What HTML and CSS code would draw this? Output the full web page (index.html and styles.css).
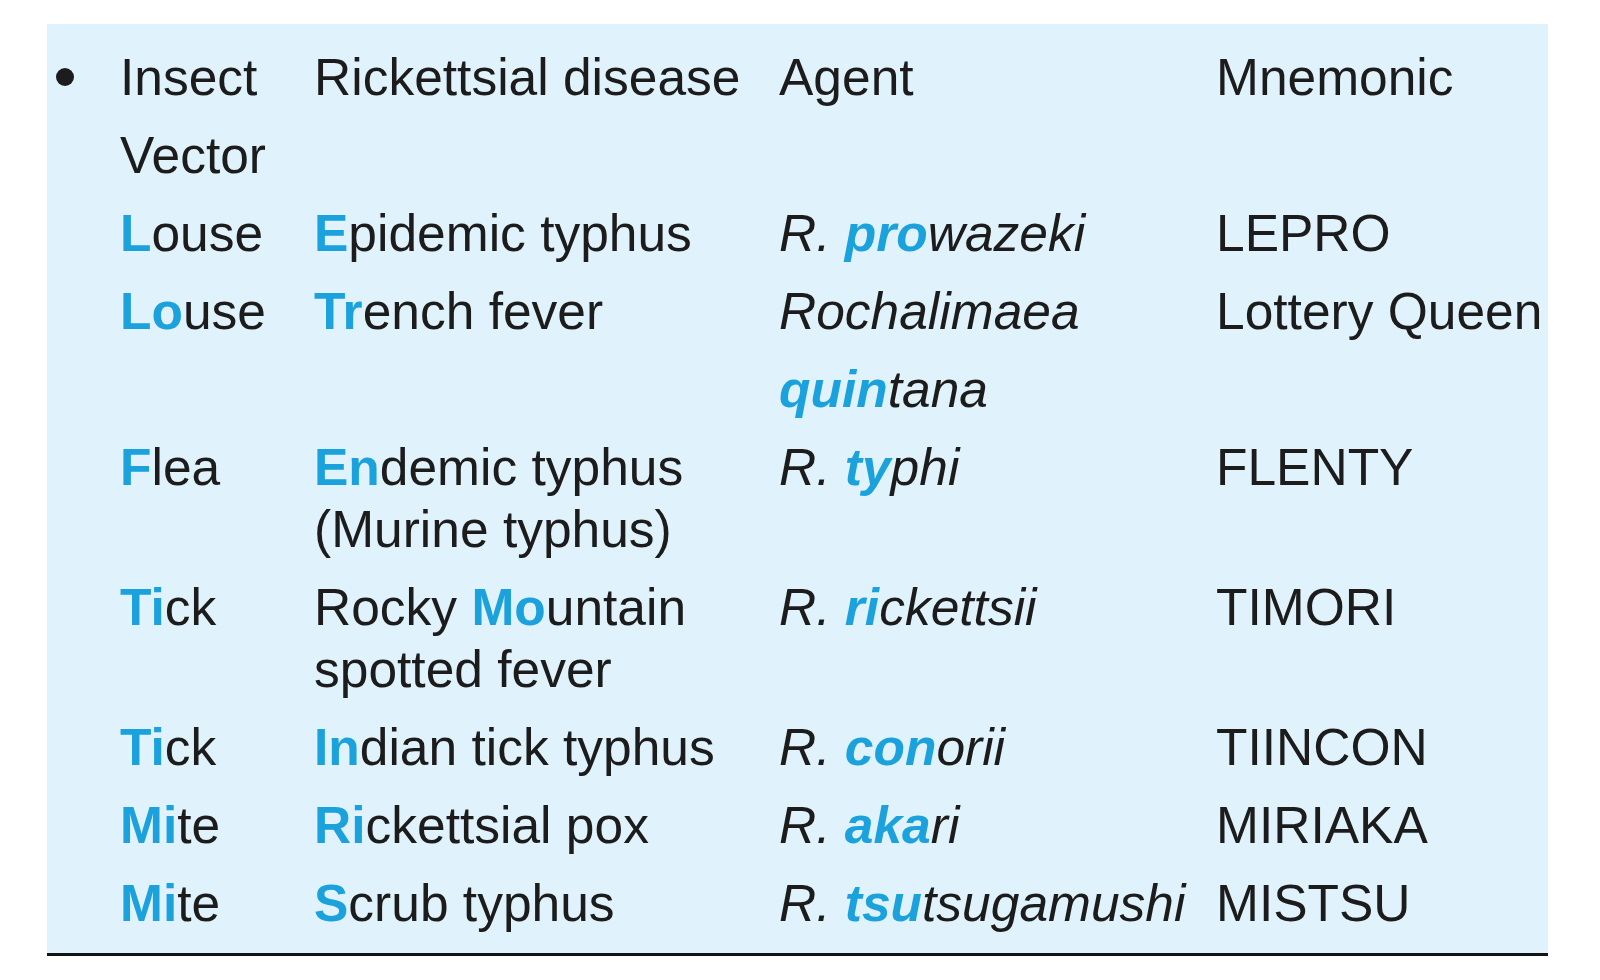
FILE: index.html
```html
<!DOCTYPE html>
<html lang="en">
<head>
<meta charset="utf-8">
<title>Rickettsial diseases mnemonic</title>
<link rel="stylesheet" href="styles.css">
</head>
<body>
<div class="panel">
  <table class="mnemo">
    <colgroup>
      <col class="c-bullet">
      <col class="c-vector">
      <col class="c-disease">
      <col class="c-agent">
      <col class="c-mnemonic">
    </colgroup>
    <tbody>
      <tr>
        <td class="bullet"><span class="dot"></span></td>
        <td>Insect</td>
        <td>Rickettsial disease</td>
        <td>Agent</td>
        <td>Mnemonic</td>
      </tr>
      <tr>
        <td></td>
        <td>Vector</td>
        <td></td>
        <td></td>
        <td></td>
      </tr>
      <tr>
        <td></td>
        <td><b>L</b>ouse</td>
        <td><b>E</b>pidemic typhus</td>
        <td class="agent">R. <b>pro</b>wazeki</td>
        <td>LEPRO</td>
      </tr>
      <tr>
        <td></td>
        <td><b>Lo</b>use</td>
        <td><b>Tr</b>ench fever</td>
        <td class="agent">Rochalimaea</td>
        <td>Lottery Queen</td>
      </tr>
      <tr>
        <td></td>
        <td></td>
        <td></td>
        <td class="agent"><b>quin</b>tana</td>
        <td></td>
      </tr>
      <tr>
        <td></td>
        <td><b>F</b>lea</td>
        <td><b>En</b>demic typhus<br>(Murine typhus)</td>
        <td class="agent">R. <b>ty</b>phi</td>
        <td>FLENTY</td>
      </tr>
      <tr>
        <td></td>
        <td><b>Ti</b>ck</td>
        <td>Rocky <b>Mo</b>untain<br>spotted fever</td>
        <td class="agent">R. <b>ri</b>ckettsii</td>
        <td>TIMORI</td>
      </tr>
      <tr>
        <td></td>
        <td><b>Ti</b>ck</td>
        <td><b>In</b>dian tick typhus</td>
        <td class="agent">R. <b>con</b>orii</td>
        <td>TIINCON</td>
      </tr>
      <tr>
        <td></td>
        <td><b>Mi</b>te</td>
        <td><b>Ri</b>ckettsial pox</td>
        <td class="agent">R. <b>aka</b>ri</td>
        <td>MIRIAKA</td>
      </tr>
      <tr>
        <td></td>
        <td><b>Mi</b>te</td>
        <td><b>S</b>crub typhus</td>
        <td class="agent">R. <b>tsu</b>tsugamushi</td>
        <td>MISTSU</td>
      </tr>
    </tbody>
  </table>
</div>
</body>
</html>
```
FILE: styles.css
```css
html, body {
  margin: 0;
  padding: 0;
  background: #ffffff;
}

body {
  font-family: "Liberation Sans", Arial, sans-serif;
  color: #1c1c1c;
}

.panel {
  margin: 24px 0 0 47px;
  width: 1501px;
  background: #e0f2fc;
  padding: 14px 0 11px 0;
  border-bottom: 3px solid #141414;
  box-sizing: border-box;
}

.mnemo {
  border-collapse: collapse;
  table-layout: fixed;
  width: 1501px;
  font-size: 51.5px;
  line-height: 62px;
}

.c-bullet { width: 73px; }
.c-vector { width: 194px; }
.c-disease { width: 465px; }
.c-agent { width: 437px; }
.c-mnemonic { width: 332px; }

.mnemo td {
  padding: 8px 0;
  vertical-align: top;
  white-space: nowrap;
}

.mnemo b {
  color: #1ba2dd;
  font-weight: bold;
}

.agent {
  font-style: italic;
}

.mnemo td.bullet {
  padding-left: 9px;
}

.dot {
  display: inline-block;
  width: 18px;
  height: 18px;
  border-radius: 50%;
  background: #1c1c1c;
  vertical-align: 9px;
}
```
